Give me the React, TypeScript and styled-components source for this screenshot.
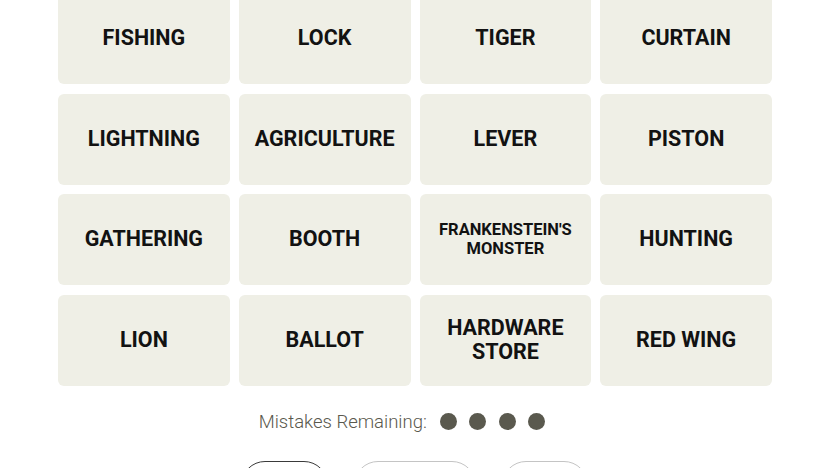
import React from 'react';
import styled, { createGlobalStyle } from 'styled-components';

const GlobalStyle = createGlobalStyle`
    html, body {
        margin: 0;
        padding: 0;
        background: #ffffff;
        overflow: hidden;
    }
    body {
        font-family: "Roboto", "Liberation Sans", Arial, sans-serif;
        color: #121212;
    }
`;

const Page = styled.div`
    width: 832px;
    height: 468px;
    overflow: hidden;
    display: flex;
    flex-direction: column;
    align-items: center;
`;

const Board = styled.div`
    width: 714px;
    margin-top: -7px;
    margin-right: 2px;
    display: grid;
    grid-template-columns: repeat(4, 1fr);
    column-gap: 9px;
    row-gap: 9.5px;
`;

const Tile = styled.button<{ $small?: boolean }>`
    height: 91px;
    border: none;
    border-radius: 6px;
    background: #efefe6;
    color: #121212;
    font-family: "Roboto", "Liberation Sans", Arial, sans-serif;
    font-weight: 700;
    font-size: ${p => (p.$small ? '16.5px' : '21.5px')};
    line-height: ${p => (p.$small ? '19px' : '24px')};
    text-transform: uppercase;
    text-align: center;
    padding: 0 6px 1px;
    display: flex;
    align-items: center;
    justify-content: center;
    cursor: pointer;
`;

const Mistakes = styled.div`
    margin-top: 25px;
    margin-right: 28px;
    height: 24px;
    display: flex;
    align-items: center;
    gap: 13px;
    font-family: "Roboto", sans-serif;
    font-weight: 300;
    font-size: 18.5px;
    color: #5a594e;
`;

const Dots = styled.div`
    display: flex;
    gap: 12.5px;
`;

const Dot = styled.span`
    width: 17px;
    height: 17px;
    border-radius: 50%;
    background: #5a594e;
`;

const Controls = styled.div`
    margin-top: 28px;
    display: flex;
    gap: 26px;
    margin-right: 3px;
`;

const Pill = styled.button<{ $active?: boolean }>`
    height: 48px;
    padding: 0 15px;
    border-radius: 32px;
    border: 1px solid ${p => (p.$active ? '#3a3a3a' : '#c4c4c4')};
    background: #ffffff;
    color: ${p => (p.$active ? '#121212' : '#b8b8b8')};
    font-family: "Roboto", sans-serif;
    font-size: 16px;
    font-weight: 600;
    display: flex;
    align-items: center;
    justify-content: center;
`;

const words: string[] = [
    'Fishing', 'Lock', 'Tiger', 'Curtain',
    'Lightning', 'Agriculture', 'Lever', 'Piston',
    'Gathering', 'Booth', "Frankenstein's Monster", 'Hunting',
    'Lion', 'Ballot', 'Hardware Store', 'Red Wing',
];

const App: React.FC = () => (
    <>
        <GlobalStyle />
        <Page>
            <Board>
                {words.map(w => (
                    <Tile key={w} $small={w.length > 16}>{w}</Tile>
                ))}
            </Board>
            <Mistakes>
                Mistakes Remaining:
                <Dots>
                    <Dot /><Dot /><Dot /><Dot />
                </Dots>
            </Mistakes>
            <Controls>
                <Pill $active style={{ width: 87 }}>Shuffle</Pill>
                <Pill style={{ width: 122 }}>Deselect All</Pill>
                <Pill style={{ width: 86 }}>Submit</Pill>
            </Controls>
        </Page>
    </>
);

export default App;
